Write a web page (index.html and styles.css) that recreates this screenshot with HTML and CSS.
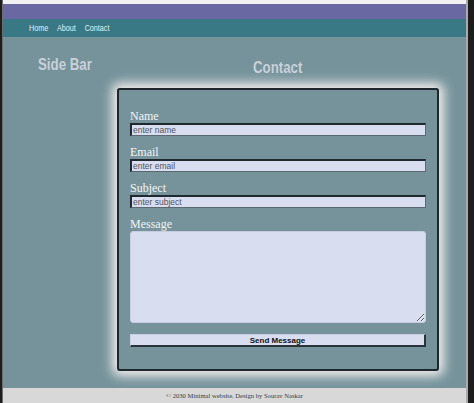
FILE: index.html
```html
<!DOCTYPE html>
<html>
<head>
<meta charset="utf-8">
<title>Contact - Minimal website</title>
<link rel="stylesheet" href="styles.css">
</head>
<body>
<div class="site">
  <div class="topstrip"></div>
  <header class="banner"></header>
  <nav class="nav">
    <div class="nav-links">
      <a href="#">Home</a>
      <a href="#">About</a>
      <a href="#">Contact</a>
    </div>
  </nav>
  <main class="main">
    <aside class="sidebar">
      <h2 class="side-title"><span class="narrow narrow-left">Side Bar</span></h2>
    </aside>
    <section class="content">
      <h2 class="content-title"><span class="narrow">Contact</span></h2>
      <form class="contact-box">
        <div class="field">
          <label class="label">Name</label>
          <input class="input" type="text" placeholder="enter name">
        </div>
        <div class="field">
          <label class="label">Email</label>
          <input class="input" type="text" placeholder="enter email">
        </div>
        <div class="field">
          <label class="label">Subject</label>
          <input class="input" type="text" placeholder="enter subject">
        </div>
        <div class="field">
          <label class="label">Message</label>
          <textarea class="textarea"></textarea>
        </div>
        <button class="send" type="button">Send Message</button>
      </form>
    </section>
  </main>
  <footer class="footer">© 2030 Minimal website. Design by Sourav Naskar</footer>
</div>
</body>
</html>
```
FILE: styles.css
```css
html, body {
  margin: 0;
  padding: 0;
  height: 100%;
}
body {
  background: #1d1d1d;
  overflow: hidden;
}
.site {
  margin: 0 6px 0 2px;
  height: 403px;
  border-left: 1px solid #6e6e6e;
  border-right: 2px solid #aaaaaa;
  background: #76939b;
  display: flex;
  flex-direction: column;
}
.topstrip {
  height: 4px;
  background: #f1f1f3;
}
.banner {
  height: 15px;
  background: #6a68a2;
}
.nav {
  height: 18px;
  background: #387985;
  display: flex;
  align-items: center;
  padding-left: 26px;
}
.nav-links {
  display: flex;
  gap: 11px;
  transform: scaleX(0.8);
  transform-origin: left center;
}
.nav-links a {
  font-family: "Liberation Sans", Arial, sans-serif;
  font-size: 9px;
  color: #e6eef0;
  text-decoration: none;
}
.main {
  flex: 1;
  display: flex;
}
.sidebar {
  width: 114px;
  padding-left: 35px;
  box-sizing: border-box;
}
.side-title, .content-title {
  font-family: "Liberation Sans", Arial, sans-serif;
  font-weight: bold;
  font-size: 17px;
  line-height: 18px;
  color: #c9d0d9;
  margin: 0;
}
.narrow {
  display: inline-block;
  transform: scaleX(0.78);
  transform-origin: center center;
}
.narrow-left {
  transform-origin: left center;
}
.side-title {
  margin-top: 19px;
}
.content {
  width: 322px;
}
.content-title {
  text-align: center;
  margin-top: 22px;
  margin-bottom: 11px;
}
.contact-box {
  border: 2px solid #1e282c;
  border-radius: 3px;
  padding: 20px 11px 22px;
  box-shadow: 0 0 11px 5px #f3eeee;
  display: flex;
  flex-direction: column;
}
.field {
  display: flex;
  flex-direction: column;
  margin-bottom: 10px;
}
.label {
  font-family: "Liberation Serif", serif;
  font-size: 12px;
  line-height: 13px;
  color: #f2f4f6;
}
.input {
  box-sizing: border-box;
  height: 13px;
  width: 100%;
  margin: 0;
  padding: 0 1px;
  background: #d8ddf0;
  border: 1px solid #5a6870;
  border-top: 2px solid #1f2a30;
  border-left: 2px solid #1f2a30;
  font-family: "Liberation Sans", sans-serif;
  font-size: 8.5px;
  color: #333;
  outline: none;
}
.input::placeholder {
  color: #50555e;
}
.textarea {
  box-sizing: border-box;
  height: 92px;
  width: 100%;
  margin: 0;
  background: #d8ddf0;
  border: 1px solid #c7cde0;
  border-radius: 3px;
  resize: both;
  outline: none;
}
.field:last-of-type {
  margin-bottom: 11px;
}
.send {
  box-sizing: border-box;
  height: 13px;
  width: 100%;
  margin: 0;
  padding: 0;
  background: #d8ddf0;
  border: 1px solid #c9cfe0;
  border-right: 2px solid #2a3438;
  border-bottom: 2px solid #2a3438;
  font-family: "Liberation Sans", sans-serif;
  font-weight: bold;
  font-size: 8px;
  line-height: 9px;
  color: #111;
}
.footer {
  height: 15px;
  background: #d8d8d8;
  font-family: "Liberation Serif", serif;
  font-size: 6.6px;
  line-height: 15px;
  color: #3a3a3a;
  text-align: center;
}
```
